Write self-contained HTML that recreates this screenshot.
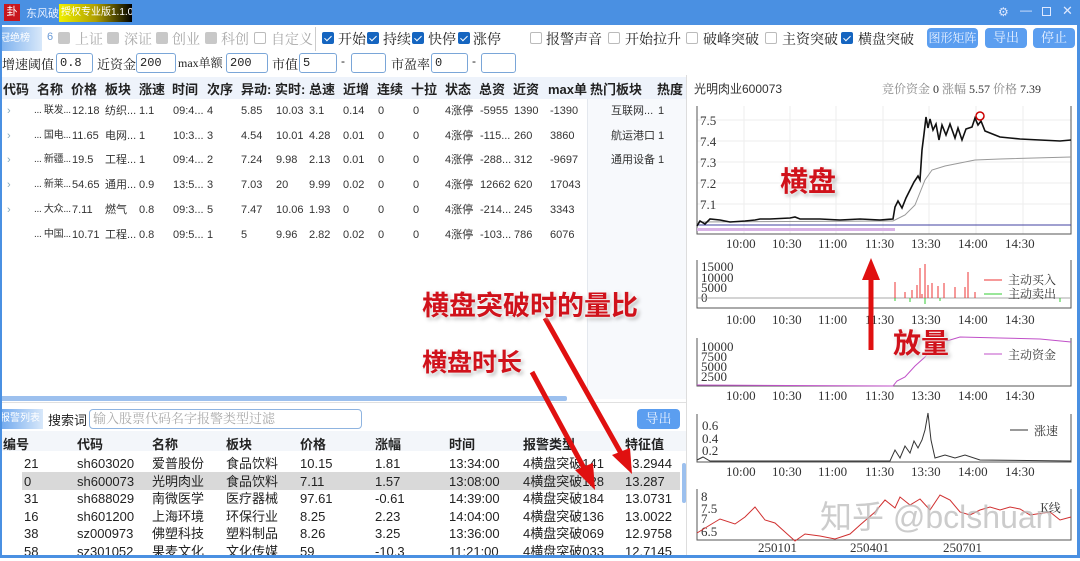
<!DOCTYPE html>
<html><head><meta charset="utf-8"><style>
*{margin:0;padding:0;box-sizing:border-box}
body{width:1080px;height:558px;overflow:hidden;background:#fff;font-family:"Liberation Sans","Noto Sans CJK SC",sans-serif;position:relative;color:#222}
.a{position:absolute;white-space:nowrap}
pre.a{white-space:pre}
.ser{font-family:"Liberation Serif","Noto Serif CJK SC",serif}
.cb{position:absolute;width:12px;height:12px;border:1px solid #bbb;border-radius:2px;background:#fff}
.cb.g{background:#c8c8c8;border-color:#c8c8c8}
.cb.on{background:#1565c0;border-color:#1565c0}
.cb.on:after{content:"";position:absolute;left:3px;top:1px;width:3px;height:6px;border:solid #fff;border-width:0 1.5px 1.5px 0;transform:rotate(45deg)}
.btn{position:absolute;background:#5b9ef0;color:#e8f1ff;border-radius:4px;font-size:13px;text-align:center;line-height:20px;white-space:nowrap;overflow:hidden;font-family:"Liberation Serif","Noto Serif CJK SC",serif}
.inp{position:absolute;height:20px;border:1px solid #7aa6d8;border-radius:3px;background:#fff;font-size:12px;padding-left:3px;line-height:18px;font-family:"Liberation Mono",monospace}
.th{font-weight:bold;font-size:13px}
.ann{position:absolute;color:#d0121b;font-weight:bold;white-space:nowrap;text-shadow:0 0 3px #fff,0 0 5px #fff,2px 2px 4px #999}
</style></head><body>
<div class="a" style="left:0;top:0;width:1080px;height:25px;background:#4a90e2"></div>
<div class="a" style="left:4px;top:4px;width:16px;height:17px;background:#c8161d;color:#fff;font-size:11px;text-align:center;line-height:17px">卦</div>
<div class="a" style="left:26px;top:5px;font-size:11px;color:#e8f0ff">东风破</div>
<div class="a" style="left:59px;top:4px;width:73px;height:18px;background:linear-gradient(90deg,#f0f000,#b0a000 50%,#000);color:#fff;font-size:10px;line-height:18px;padding-left:2px;overflow:hidden">授权专业版1.1.0</div>
<div class="a" style="left:998px;top:5px;font-size:12px;color:#dfe9ff">⚙</div>
<div class="a" style="left:1020px;top:3px;font-size:12px;color:#dfe9ff">—</div>
<div class="a" style="left:1042px;top:7px;width:9px;height:9px;border:1px solid #dfe9ff"></div>
<div class="a" style="left:1062px;top:3px;font-size:13px;color:#dfe9ff">✕</div>
<div class="a" style="left:0;top:27px;width:42px;height:24px;background:linear-gradient(90deg,#7bb0ee,#d8e8fa);color:#fff;font-size:10px;line-height:24px">冠绝榜</div>
<div class="a" style="left:47px;top:31px;font-size:11px;color:#6a9ad6">6</div>
<div class="cb g" style="left:58px;top:32px"></div><div class="a ser" style="left:75px;top:29px;font-size:14px;color:#aaa">上证</div>
<div class="cb g" style="left:107px;top:32px"></div><div class="a ser" style="left:124px;top:29px;font-size:14px;color:#aaa">深证</div>
<div class="cb g" style="left:156px;top:32px"></div><div class="a ser" style="left:172px;top:29px;font-size:14px;color:#aaa">创业</div>
<div class="cb g" style="left:205px;top:32px"></div><div class="a ser" style="left:221px;top:29px;font-size:14px;color:#aaa">科创</div>
<div class="cb" style="left:254px;top:32px"></div><div class="a ser" style="left:271px;top:29px;font-size:14px;color:#aaa">自定义</div>
<div class="a" style="left:315px;top:27px;width:1px;height:24px;background:#ccc"></div>
<div class="cb on" style="left:322px;top:32px"></div><div class="a ser" style="left:338px;top:29px;font-size:14px">开始</div>
<div class="cb on" style="left:367px;top:32px"></div><div class="a ser" style="left:383px;top:29px;font-size:14px">持续</div>
<div class="cb on" style="left:412px;top:32px"></div><div class="a ser" style="left:428px;top:29px;font-size:14px">快停</div>
<div class="cb on" style="left:458px;top:32px"></div><div class="a ser" style="left:473px;top:29px;font-size:14px">涨停</div>
<div class="cb" style="left:530px;top:32px"></div><div class="a ser" style="left:546px;top:29px;font-size:14px">报警声音</div>
<div class="cb" style="left:608px;top:32px"></div><div class="a ser" style="left:625px;top:29px;font-size:14px">开始拉升</div>
<div class="cb" style="left:686px;top:32px"></div><div class="a ser" style="left:703px;top:29px;font-size:14px">破峰突破</div>
<div class="cb" style="left:765px;top:32px"></div><div class="a ser" style="left:782px;top:29px;font-size:14px">主资突破</div>
<div class="cb on" style="left:841px;top:32px"></div><div class="a ser" style="left:858px;top:29px;font-size:14px">横盘突破</div>
<div class="btn" style="left:927px;top:28px;width:51px;font-size:12px">图形矩阵</div>
<div class="btn" style="left:985px;top:28px;width:42px">导出</div>
<div class="btn" style="left:1033px;top:28px;width:42px">停止</div>
<div class="a ser" style="left:2px;top:54px;font-size:13px">增速阈值</div><div class="inp" style="left:56px;top:53px;width:37px">0.8</div>
<div class="a ser" style="left:97px;top:54px;font-size:13px">近资金</div><div class="inp" style="left:136px;top:53px;width:40px">200</div>
<div class="a ser" style="left:178px;top:54px;font-size:12px">max单额</div><div class="inp" style="left:226px;top:53px;width:42px">200</div>
<div class="a ser" style="left:272px;top:54px;font-size:13px">市值</div><div class="inp" style="left:299px;top:53px;width:38px">5</div>
<div class="a" style="left:341px;top:54px;font-size:12px">-</div><div class="inp" style="left:351px;top:53px;width:35px"></div>
<div class="a ser" style="left:391px;top:54px;font-size:13px">市盈率</div><div class="inp" style="left:431px;top:53px;width:37px">0</div>
<div class="a" style="left:472px;top:54px;font-size:12px">-</div><div class="inp" style="left:481px;top:53px;width:35px"></div>
<div class="a" style="left:0;top:77px;width:686px;height:22px;background:#eef3fb"></div>
<div class="a" style="left:587px;top:99px;width:99px;height:300px;background:#f7f9fc;border-left:1px solid #e4e8ee"></div>
<div class="a th" style="left:3px;top:79px">代码</div><div class="a th" style="left:37px;top:79px">名称</div><div class="a th" style="left:71px;top:79px">价格</div><div class="a th" style="left:105px;top:79px">板块</div><div class="a th" style="left:139px;top:79px">涨速</div><div class="a th" style="left:172px;top:79px">时间</div><div class="a th" style="left:207px;top:79px">次序</div><div class="a th" style="left:241px;top:79px;width:33px;overflow:hidden">异动:</div><div class="a th" style="left:275px;top:79px;width:33px;overflow:hidden">实时:</div><div class="a th" style="left:309px;top:79px;width:33px;overflow:hidden">总速</div><div class="a th" style="left:343px;top:79px">近增</div><div class="a th" style="left:377px;top:79px">连续</div><div class="a th" style="left:411px;top:79px">十拉</div><div class="a th" style="left:445px;top:79px">状态</div><div class="a th" style="left:479px;top:79px">总资</div><div class="a th" style="left:513px;top:79px">近资</div><div class="a th" style="left:548px;top:79px;width:40px;overflow:hidden">max单</div><div class="a th" style="left:590px;top:79px">热门板块</div><div class="a th" style="left:657px;top:79px">热度</div>
<div class="a" style="left:0;top:99px;width:690px;height:160px">
<pre class="a" style="left:7px;top:0;font:11px/24.7px 'Liberation Sans';color:#8ab">›
›
›
›
›</pre>
<pre class="a" style="left:34px;top:0;font:10px/24.7px 'Liberation Sans','Noto Sans CJK SC';color:#333;letter-spacing:-0.3px">... 联发...
... 国电...
... 新疆...
... 新莱...
... 大众...
... 中国...</pre>
<pre class="a" style="left:72px;top:0;font:11px/24.7px 'Liberation Sans';color:#333">12.18
11.65
19.5
54.65
7.11
10.71</pre>
<pre class="a" style="left:105px;top:0;font:11px/24.7px 'Liberation Sans','Noto Sans CJK SC';color:#333">纺织...
电网...
工程...
通用...
燃气
工程...</pre>
<pre class="a" style="left:139px;top:0;font:11px/24.7px 'Liberation Sans';color:#333">1.1
1
1
0.9
0.8
0.8</pre>
<pre class="a" style="left:173px;top:0;font:11px/24.7px 'Liberation Sans';color:#333">09:4...
10:3...
09:4...
13:5...
09:3...
09:5...</pre>
<pre class="a" style="left:207px;top:0;font:11px/24.7px 'Liberation Sans';color:#333">4
3
2
3
5
1</pre>
<pre class="a" style="left:241px;top:0;font:11px/24.7px 'Liberation Sans';color:#333">5.85
4.54
7.24
7.03
7.47
5</pre>
<pre class="a" style="left:276px;top:0;font:11px/24.7px 'Liberation Sans';color:#333">10.03
10.01
9.98
20
10.06
9.96</pre>
<pre class="a" style="left:309px;top:0;font:11px/24.7px 'Liberation Sans';color:#333">3.1
4.28
2.13
9.99
1.93
2.82</pre>
<pre class="a" style="left:343px;top:0;font:11px/24.7px 'Liberation Sans';color:#333">0.14
0.01
0.01
0.02
0
0.02</pre>
<pre class="a" style="left:378px;top:0;font:11px/24.7px 'Liberation Sans';color:#333">0
0
0
0
0
0</pre>
<pre class="a" style="left:413px;top:0;font:11px/24.7px 'Liberation Sans';color:#333">0
0
0
0
0
0</pre>
<pre class="a" style="left:445px;top:0;font:11px/24.7px 'Liberation Sans','Noto Sans CJK SC';color:#333">4涨停
4涨停
4涨停
4涨停
4涨停
4涨停</pre>
<pre class="a" style="left:480px;top:0;font:11px/24.7px 'Liberation Sans';color:#333">-5955
-115...
-288...
12662
-214...
-103...</pre>
<pre class="a" style="left:514px;top:0;font:11px/24.7px 'Liberation Sans';color:#333">1390
260
312
620
245
786</pre>
<pre class="a" style="left:550px;top:0;font:11px/24.7px 'Liberation Sans';color:#333">-1390
3860
-9697
17043
3343
6076</pre>
<pre class="a" style="left:611px;top:0;font:11px/24.7px 'Liberation Sans','Noto Sans CJK SC';color:#333">互联网...
航运港口
通用设备</pre>
<pre class="a" style="left:658px;top:0;font:11px/24.7px 'Liberation Sans';color:#333">1
1
1</pre>
</div>
<div class="a" style="left:0;top:396px;width:567px;height:5px;background:#9cc0ee;border-radius:2px"></div>
<div class="a" style="left:0;top:402px;width:686px;height:1px;background:#e0e0e0"></div>
<div class="a" style="left:0;top:409px;width:43px;height:20px;background:linear-gradient(90deg,#6fa8ee,#d8e8fa);color:#fff;font-size:10px;line-height:20px">报警列表</div>
<div class="a" style="left:48px;top:410px;font-size:13px">搜索词</div>
<div class="a" style="left:89px;top:409px;width:273px;height:20px;border:1px solid #8fb4e0;border-radius:4px;font-size:13px;color:#aaa;padding-left:3px;line-height:18px;font-family:'Liberation Serif','Noto Serif CJK SC',serif">输入股票代码名字报警类型过滤</div>
<div class="btn" style="left:637px;top:409px;width:43px;height:20px;font-size:13px">导出</div>
<div class="a" style="left:0;top:431px;width:686px;height:20px;background:#f3f6fa"></div>
<div class="a" style="left:22px;top:472px;width:658px;height:18px;background:#d9d9d9"></div>
<div class="a" style="left:682px;top:463px;width:4px;height:40px;background:#9cc0ee;border-radius:2px"></div>
<div class="a th" style="left:3px;top:434px">编号</div><div class="a th" style="left:77px;top:434px">代码</div><div class="a th" style="left:152px;top:434px">名称</div><div class="a th" style="left:226px;top:434px">板块</div><div class="a th" style="left:300px;top:434px">价格</div><div class="a th" style="left:375px;top:434px">涨幅</div><div class="a th" style="left:449px;top:434px">时间</div><div class="a th" style="left:523px;top:434px">报警类型</div><div class="a th" style="left:625px;top:434px">特征值</div>
<pre class="a" style="left:24px;top:455px;font:13px/17.6px 'Liberation Sans'">21
0
31
16
38
58</pre>
<pre class="a" style="left:77px;top:455px;font:13px/17.6px 'Liberation Sans'">sh603020
sh600073
sh688029
sh601200
sz000973
sz301052</pre>
<pre class="a" style="left:152px;top:455px;font:13px/17.6px 'Liberation Sans','Noto Sans CJK SC'">爱普股份
光明肉业
南微医学
上海环境
佛塑科技
果麦文化</pre>
<pre class="a" style="left:226px;top:455px;font:13px/17.6px 'Liberation Sans','Noto Sans CJK SC'">食品饮料
食品饮料
医疗器械
环保行业
塑料制品
文化传媒</pre>
<pre class="a" style="left:300px;top:455px;font:13px/17.6px 'Liberation Sans'">10.15
7.11
97.61
8.25
8.26
59</pre>
<pre class="a" style="left:375px;top:455px;font:13px/17.6px 'Liberation Sans'">1.81
1.57
-0.61
2.23
3.25
-10.3</pre>
<pre class="a" style="left:449px;top:455px;font:13px/17.6px 'Liberation Sans'">13:34:00
13:08:00
14:39:00
14:04:00
13:36:00
11:21:00</pre>
<pre class="a" style="left:523px;top:455px;font:13px/17.6px 'Liberation Sans','Noto Sans CJK SC'">4横盘突破141
4横盘突破128
4横盘突破184
4横盘突破136
4横盘突破069
4横盘突破033</pre>
<pre class="a" style="left:625px;top:455px;font:13px/17.6px 'Liberation Sans'">13.2944
13.287
13.0731
13.0022
12.9758
12.7145</pre>
<div class="a" style="left:0;top:555px;width:1080px;height:3px;background:#4a90e2"></div>
<div class="a" style="left:0;top:25px;width:2px;height:533px;background:#4a90e2"></div>
<div class="a" style="left:1077px;top:25px;width:3px;height:533px;background:#4a90e2"></div>
<div class="a" style="left:686px;top:75px;width:1px;height:480px;background:#ddd"></div>
<div class="a" style="left:694px;top:80px;font-size:12px;color:#333">光明肉业600073</div>
<div class="a ser" style="left:882px;top:80px;font-size:12px;color:#888">竞价资金 <span style="color:#333">0</span> 涨幅 <span style="color:#333">5.57</span> 价格 <span style="color:#333">7.39</span></div>
<svg class="a" style="left:0;top:0" width="1080" height="558" font-family="Liberation Serif, serif">
<g stroke="#eee" stroke-width="1">
<path d="M744 106V234M790 106V234M836 106V234M883 106V234M929 106V234M976 106V234M1023 106V234"/>
<path d="M697 120H1071M697 141H1071M697 162H1071M697 183H1071M697 204H1071"/>
</g>
<path d="M697 106V234H1071V106" fill="none" stroke="#555"/>
<g font-size="13" fill="#333"><text x="700" y="125">7.5</text><text x="700" y="146">7.4</text><text x="700" y="167">7.3</text><text x="700" y="188">7.2</text><text x="700" y="209">7.1</text></g>
<rect x="697" y="228" width="198" height="3" fill="#d9b3e6"/>
<line x1="697" y1="225" x2="1071" y2="225" stroke="#4040a0"/>
<polyline fill="none" stroke="#999" points="697,222 893,221 905,215 915,205 925,180 932,170 945,166 960,163 975,160 1000,159 1071,157"/>
<polyline fill="none" stroke="#111" stroke-width="1.6" points="697,226 700,221 705,224 710,219 720,220 730,222 745,221 755,220 760,219 770,219 790,218 795,217 800,219 820,219 840,220 860,219 880,220 893,219 895,207 898,201 902,208 906,198 910,190 914,182 918,176 920,180 922,150 924,134 926,117 928,128 930,119 933,130 936,124 939,140 942,125 946,135 950,124 955,138 958,128 962,140 966,129 972,127 975,118 978,125 981,121 985,131 990,133 995,135 1000,137 1010,138 1020,139 1040,140 1060,141 1071,140"/>
<circle cx="980" cy="116" r="4" fill="none" stroke="#c00" stroke-width="1.5"/>
<g font-size="13" fill="#333"><text x="726" y="248">10:00</text><text x="772" y="248">10:30</text><text x="818" y="248">11:00</text><text x="865" y="248">11:30</text><text x="911" y="248">13:30</text><text x="958" y="248">14:00</text><text x="1005" y="248">14:30</text></g>
<path d="M697 260V308H1071V260" fill="none" stroke="#555"/>
<g font-size="13" fill="#333"><text x="701" y="271">15000</text><text x="701" y="282">10000</text><text x="701" y="292">5000</text><text x="701" y="302">0</text></g>
<line x1="697" y1="298" x2="1071" y2="298" stroke="#aaa"/>
<g stroke="#e33"><path d="M895 298V282M905 298V292M912 298V290M917 298V285M920 298V268M922 298V294M925 298V264M928 298V285M932 298V283M938 298V286M944 298V283M955 298V287M965 298V287M968 298V272M975 298V292"/></g>
<g stroke="#3c3"><path d="M895 298V301M910 298V302M925 298V304M940 298V301M1060 298V302"/></g>
<line x1="984" y1="280" x2="1002" y2="280" stroke="#e33"/><line x1="984" y1="294" x2="1002" y2="294" stroke="#3c3"/>
<g font-size="12" fill="#333" font-family="Noto Serif CJK SC, serif"><text x="1008" y="284">主动买入</text><text x="1008" y="298">主动卖出</text></g>
<g font-size="13" fill="#333"><text x="726" y="324">10:00</text><text x="772" y="324">10:30</text><text x="818" y="324">11:00</text><text x="865" y="324">11:30</text><text x="911" y="324">13:30</text><text x="958" y="324">14:00</text><text x="1005" y="324">14:30</text></g>
<path d="M697 338V386H1071V338" fill="none" stroke="#555"/>
<g font-size="13" fill="#333"><text x="701" y="351">10000</text><text x="701" y="361">7500</text><text x="701" y="371">5000</text><text x="701" y="381">2500</text></g>
<polyline fill="none" stroke="#c050c8" points="697,385 893,386 897,381 905,377 915,366 925,357 935,344 950,340 960,337 1000,338 1040,339 1071,342"/>
<line x1="984" y1="354" x2="1002" y2="354" stroke="#c050c8"/>
<text x="1008" y="359" font-size="12" fill="#333" font-family="Noto Serif CJK SC, serif">主动资金</text>
<g font-size="13" fill="#333"><text x="726" y="400">10:00</text><text x="772" y="400">10:30</text><text x="818" y="400">11:00</text><text x="865" y="400">11:30</text><text x="911" y="400">13:30</text><text x="958" y="400">14:00</text><text x="1005" y="400">14:30</text></g>
<path d="M697 414V462H1071V414" fill="none" stroke="#555"/>
<g font-size="13" fill="#333"><text x="702" y="430">0.6</text><text x="702" y="443">0.4</text><text x="702" y="455">0.2</text></g>
<polyline fill="none" stroke="#333" points="697,460 703,457 710,461 890,461 895,450 900,458 905,446 910,453 914,441 918,448 922,440 925,430 928,413 931,440 935,458 945,455 955,458 965,455 980,460 1071,461"/>
<line x1="1010" y1="430" x2="1028" y2="430" stroke="#333"/>
<text x="1034" y="435" font-size="12" fill="#333" font-family="Noto Serif CJK SC, serif">涨速</text>
<g font-size="13" fill="#333"><text x="726" y="476">10:00</text><text x="772" y="476">10:30</text><text x="818" y="476">11:00</text><text x="865" y="476">11:30</text><text x="911" y="476">13:30</text><text x="958" y="476">14:00</text><text x="1005" y="476">14:30</text></g>
<path d="M697 489V540H1071V489" fill="none" stroke="#555"/>
<g font-size="13" fill="#333"><text x="701" y="501">8</text><text x="701" y="513">7.5</text><text x="701" y="523">7</text><text x="701" y="536">6.5</text></g>
<polyline fill="none" stroke="#d03030" points="697,533 710,525 720,519 735,524 745,517 755,507 765,520 775,523 785,532 795,541 805,534 820,536 835,539 850,534 860,525 875,512 885,500 895,508 900,497 910,505 920,499 930,510 940,495 950,500 960,512 970,515 980,510 990,507 1000,510 1010,507 1020,509 1030,515 1050,512 1060,520 1071,517"/>
<text x="1040" y="512" font-size="12" fill="#333" font-family="Noto Serif CJK SC, serif">K线</text>
<g font-size="13" fill="#333"><text x="758" y="552">250101</text><text x="850" y="552">250401</text><text x="943" y="552">250701</text></g>
<text x="820" y="528" font-size="32" fill="#bbb" fill-opacity="0.75" font-family="Liberation Sans, Noto Sans CJK SC, sans-serif">知乎 @bclshuan</text>
<g stroke="#e01010" stroke-width="5" fill="#e01010">
<line x1="871" y1="350" x2="871" y2="275"/>
<polygon points="871,258 862,280 880,280" stroke="none"/>
<line x1="545" y1="318" x2="622" y2="455"/>
<polygon points="632,474 612,455 630,448" stroke="none"/>
<line x1="532" y1="372" x2="585" y2="470"/>
<polygon points="595,490 575,470 593,463" stroke="none"/>
</g>
</svg>
<div class="ann" style="left:780px;top:160px;font-size:28px">横盘</div>
<div class="ann" style="left:893px;top:322px;font-size:28px">放量</div>
<div class="ann" style="left:422px;top:284px;font-size:27px">横盘突破时的量比</div>
<div class="ann" style="left:422px;top:343px;font-size:25px">横盘时长</div>
</body></html>
